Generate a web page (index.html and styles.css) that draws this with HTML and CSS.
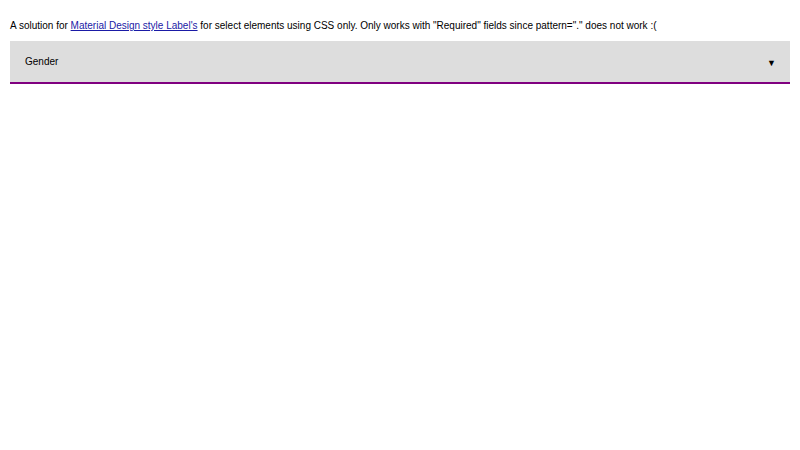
FILE: index.html
```html
<!DOCTYPE html>
<html>
<head>
<meta charset="utf-8">
<link rel="stylesheet" href="styles.css">
</head>
<body>
<p class="intro">A solution for <a href="#">Material Design style Label's</a> for select elements using CSS only. Only works with "Required" fields since pattern="." does not work :(</p>
<div class="field">
  <span class="label">Gender</span>
  <span class="arrow">&#9660;</span>
</div>
</body>
</html>
```

FILE: styles.css
```css
html, body {
  margin: 0;
  padding: 0;
  background: #fff;
}
body {
  padding: 0 10px;
  font-family: "Liberation Sans", Arial, sans-serif;
  font-size: 10px;
  color: #000;
}
.intro {
  margin: 20px 0 0 0;
  line-height: 12px;
}
.intro a {
  color: #1a1aa6;
  text-decoration: underline;
}
.field {
  margin-top: 9px;
  height: 41px;
  background: #ddd;
  border-bottom: 2px solid #800080;
  display: flex;
  align-items: center;
  justify-content: space-between;
  padding: 0 15px;
  box-sizing: content-box;
}
.label {
  font-size: 10px;
}
.arrow {
  font-size: 9px;
  margin-right: -1px;
  padding-top: 2px;
}
```
